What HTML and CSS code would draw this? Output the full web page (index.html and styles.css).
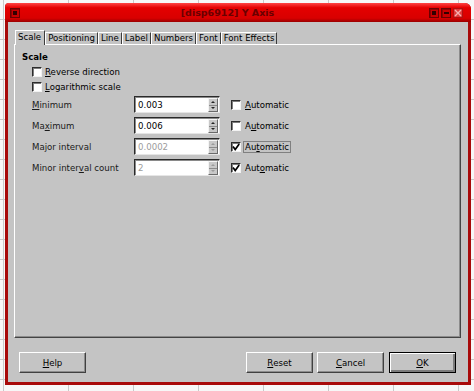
FILE: index.html
```html
<!DOCTYPE html>
<html lang="en">
<head>
  <meta charset="UTF-8" />
  <title>[disp6912] Y Axis</title>
  <link rel="stylesheet" href="styles.css">
</head>
<body>

<div class="window">
  <div class="titlebar">
    <span class="tb-btn menu"><i class="dot"></i></span>
    <span class="title">[disp6912] Y Axis</span>
    <span class="tb-btn"><i class="dot"></i></span>
    <span class="tb-btn"><i class="dash"></i></span>
    <span class="tb-btn close">
      <svg width="8" height="8" viewBox="0 0 8 8"><path d="M1 1L7 7M7 1L1 7" stroke="#f4b0b0" stroke-width="1.4"/></svg>
    </span>
  </div>

  <div class="client">
    <div class="tabs">
      <span class="tab active">Scale</span>
      <span class="tab">Positioning</span>
      <span class="tab">Line</span>
      <span class="tab">Label</span>
      <span class="tab">Numbers</span>
      <span class="tab">Font</span>
      <span class="tab">Font Effects</span>
    </div>

    <div class="panel">
      <div class="group-title">Scale</div>

      <div class="check-row"><span class="box"></span><span><u>R</u>everse direction</span></div>
      <div class="check-row"><span class="box"></span><span><u>L</u>ogarithmic scale</span></div>

      <div class="field-row">
        <span class="field-label"><u>M</u>inimum</span>
        <span class="spinfield"><span class="value">0.003</span><span class="spin"><i class="up"></i><i class="down"></i></span></span>
        <span class="box"></span><span class="auto"><u>A</u>utomatic</span>
      </div>
      <div class="field-row">
        <span class="field-label">Ma<u>x</u>imum</span>
        <span class="spinfield"><span class="value">0.006</span><span class="spin"><i class="up"></i><i class="down"></i></span></span>
        <span class="box"></span><span class="auto">A<u>u</u>tomatic</span>
      </div>
      <div class="field-row">
        <span class="field-label">Major interval</span>
        <span class="spinfield disabled"><span class="value">0.0002</span><span class="spin"><i class="up"></i><i class="down"></i></span></span>
        <span class="box checked"><svg width="8" height="8" viewBox="0 0 8 8"><path d="M1 3.5L3.2 6.5L7.2 1" fill="none" stroke="#000" stroke-width="1.7"/></svg></span><span class="auto focus">Au<u>t</u>omatic</span>
      </div>
      <div class="field-row">
        <span class="field-label">Minor inter<u>v</u>al count</span>
        <span class="spinfield disabled"><span class="value">2</span><span class="spin"><i class="up"></i><i class="down"></i></span></span>
        <span class="box checked"><svg width="8" height="8" viewBox="0 0 8 8"><path d="M1 3.5L3.2 6.5L7.2 1" fill="none" stroke="#000" stroke-width="1.7"/></svg></span><span class="auto">Aut<u>o</u>matic</span>
      </div>
    </div>

    <div class="buttons">
      <span class="btn"><u>H</u>elp</span>
      <span class="spacer"></span>
      <span class="btn"><u>R</u>eset</span>
      <span class="btn cancel"><u>C</u>ancel</span>
      <span class="btn default"><u>O</u>K</span>
    </div>
  </div>
</div>

</body>
</html>
```

FILE: styles.css
```css
* { box-sizing: border-box; }
body {
  margin: 0; padding: 3px 0 0 5px; width: 474px; height: 391px; overflow: hidden;
  font-family: "DejaVu Sans", sans-serif; font-size: 8.6px; color: #000;
  background-color: #f7f7f7;
  background-image: linear-gradient(to right, #c9c9c9 1px, transparent 1px),
                    linear-gradient(to bottom, #c9c9c9 1px, transparent 1px);
  background-size: 65px 20px;
  background-position: 3px 19px;
}
u { text-decoration: underline; text-underline-offset: 1px; }

/* window frame */
.window {
  width: 466px; height: 382px; background: #a80a0a;
  border-radius: 4px 6px 0 0; display: flex; flex-direction: column;
}
.titlebar {
  height: 19px; display: flex; align-items: center; gap: 2px;
  padding: 0 8px 0 5px; border-radius: 4px 6px 0 0;
  background: linear-gradient(to bottom, #f44 0, #e40000 25%, #d80000 80%, #9a0000 100%);
}
.title { flex: 1; text-align: center; font-weight: bold; font-size: 9.5px; color: #6a0000; padding-left: 4px; }
.tb-btn {
  width: 10px; height: 10px; display: flex; align-items: center; justify-content: center;
  border: 1px solid #6a0000; background: #c80000; box-shadow: inset 1px 1px #900000;
}
.tb-btn.menu { margin-right: 2px; }
.tb-btn.close { background: #e03a3a; border-color: #b01010; box-shadow: none; }
.dot { width: 4px; height: 4px; background: #300; display: block; }
.dash { width: 5px; height: 2px; background: #300; display: block; }

.client {
  flex: 1; margin: 0 3px 3px; background: #c4c4c4;
  padding-top: 8px; display: flex; flex-direction: column;
}

/* tabs */
.tabs { height: 14px; display: flex; align-items: flex-end; padding-left: 7px; position: relative; z-index: 1; }
.tab {
  height: 12px; line-height: 11px; padding: 0 2px 0 2px;
  border-left: 1px solid #fff; border-top: 1px solid #fff; border-right: 1px solid #3c3c3c;
  white-space: nowrap;
}
.tab.active { height: 15px; margin-bottom: -1px; line-height: 13px; background: #c4c4c4; padding: 0 3px 0 2px; }

/* panel */
.panel {
  height: 294px; margin: 0 7px 0 6px;
  border: 1px solid; border-color: #fff #444 #444 #fff;
  box-shadow: inset -1px -1px #8c8c8c;
  padding: 7px;
}
.group-title { font-weight: bold; line-height: 11px; }
.check-row { height: 15px; display: flex; align-items: center; gap: 3px; padding-left: 10px; }
.group-title + .check-row { margin-top: 1px; }

.box {
  width: 10px; height: 10px; flex: none; background: #fff;
  border: 1px solid; border-color: #2c2c2c #f2f2f2 #f2f2f2 #2c2c2c;
  box-shadow: inset 1px 1px #7c7c7c;
  display: flex; align-items: center; justify-content: center;
}

.field-row { height: 21px; display: flex; align-items: center; padding-left: 10px; }
.field-label { width: 102px; white-space: nowrap; color: #1a1a1a; }
.spinfield {
  width: 86px; height: 17px; display: flex; align-items: center; background: #fff;
  border: 1px solid; border-color: #2a2a2a #e6e6e6 #e6e6e6 #2a2a2a;
  box-shadow: inset 1px 1px #8a8a8a;
  margin-right: 11px; padding: 1px 1px 0 3px;
}
.spinfield .value { flex: 1; }
.spinfield.disabled .value { color: #9c9c9c; }
.spin {
  width: 10px; height: 14px; display: flex; flex-direction: column;
  background: #c8c8c8; border: 1px solid; border-color: #f4f4f4 #6a6a6a #6a6a6a #f4f4f4;
}
.spin i { flex: 1; display: flex; align-items: center; justify-content: center; }
.spin i.up { border-bottom: 1px solid #8a8a8a; }
.spin i::after { content: ""; width: 0; height: 0; border-left: 2px solid transparent; border-right: 2px solid transparent; }
.spin i.up::after { border-bottom: 2px solid #222; }
.spin i.down::after { border-top: 2px solid #222; }
.spinfield.disabled .spin i.up::after { border-bottom-color: #9a9a9a; }
.spinfield.disabled .spin i.down::after { border-top-color: #9a9a9a; }

.auto { margin-left: 2px; padding: 0 1px; border: 1px solid transparent; line-height: 10px; }
.auto.focus { border-color: #808080; }

/* buttons */
.buttons { margin-top: 14px; height: 21px; display: flex; gap: 4px; padding: 0 12px 0 11px; }
.spacer { flex: 1; }
.btn {
  width: 67px; height: 21px; display: flex; align-items: center; justify-content: center;
  border: 1px solid; border-color: #fff #404040 #404040 #fff;
  box-shadow: inset -1px -1px #8c8c8c;
}
.btn.cancel { margin-right: 1px; }
.btn.default { border: 1px solid #000; box-shadow: inset 1px 1px #fff, inset -2px -2px #7c7c7c; }
```
